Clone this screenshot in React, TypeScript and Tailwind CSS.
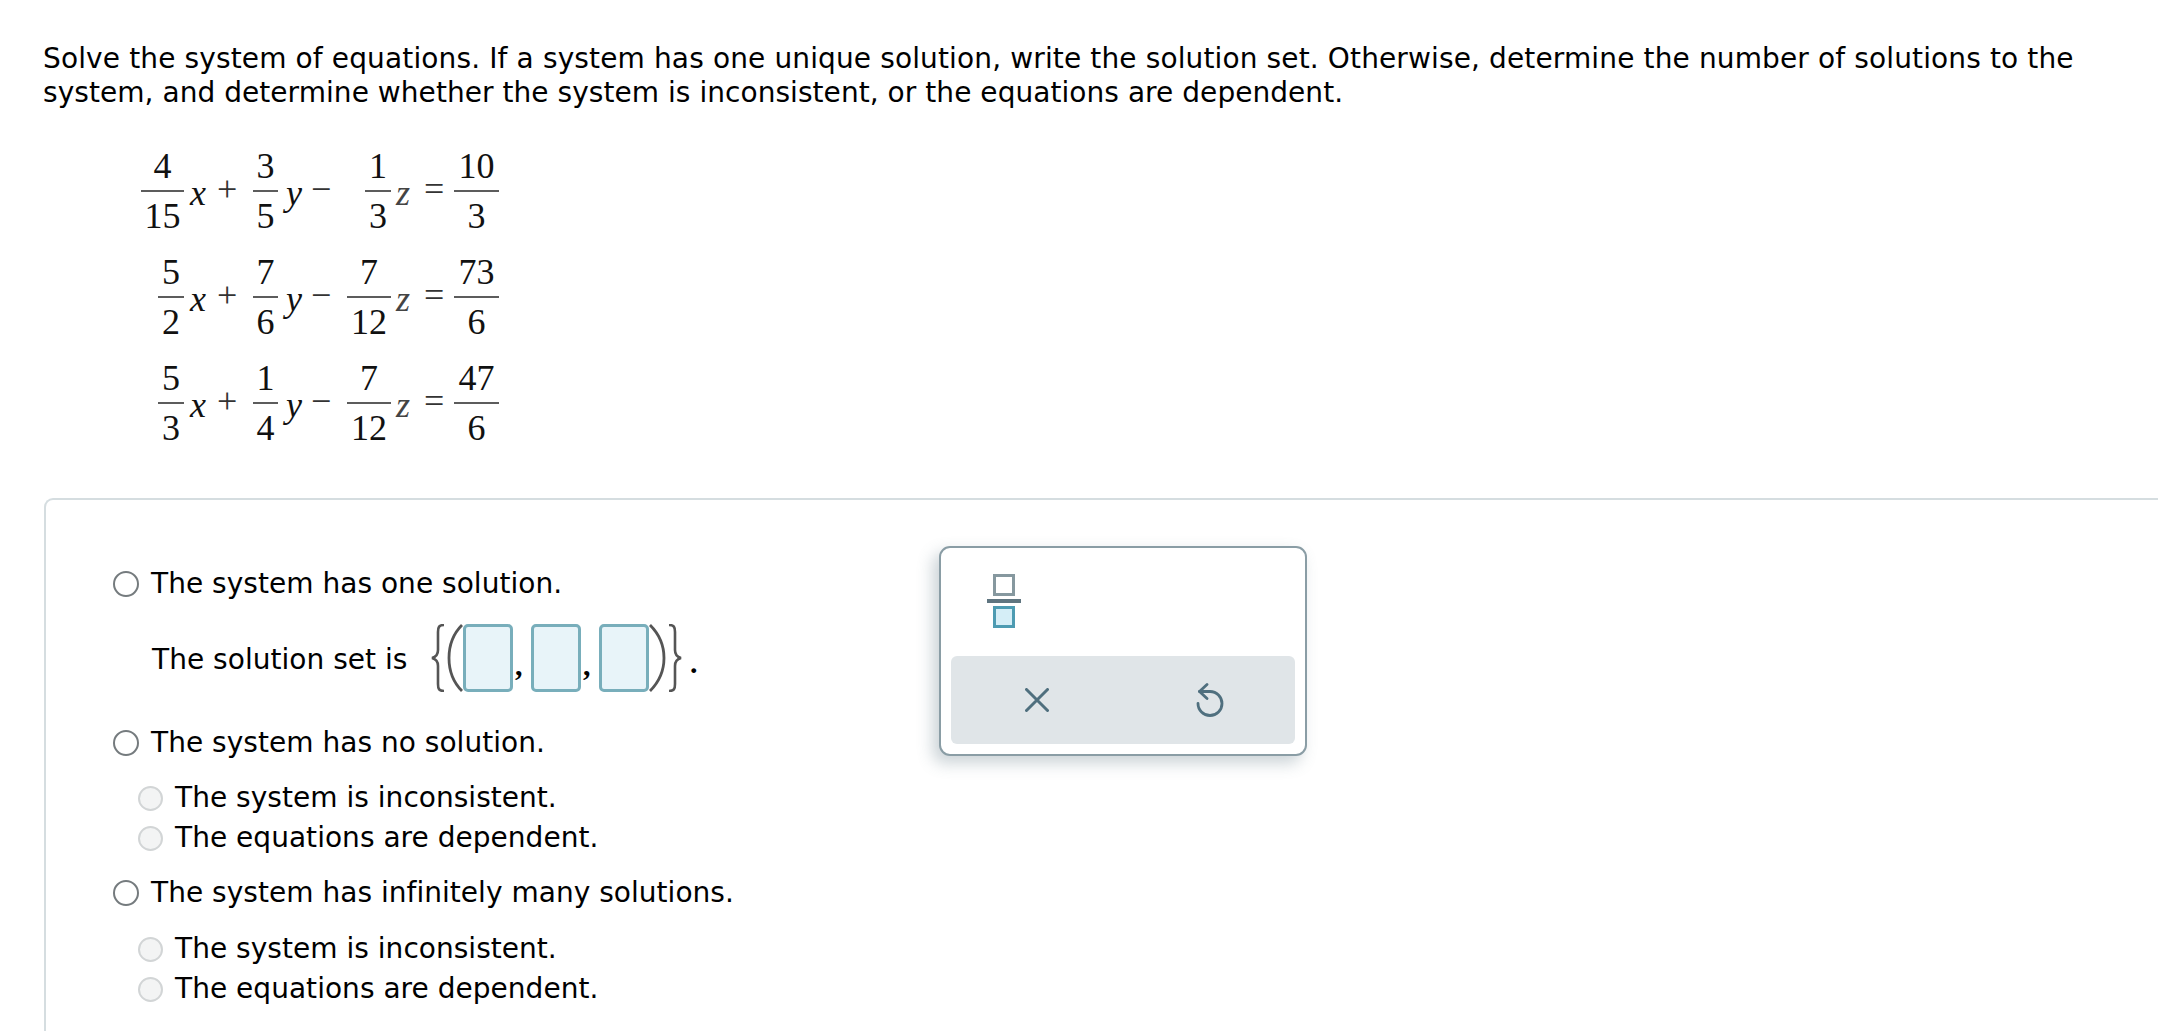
import { Fragment } from 'react'

interface FractionProps {
  top: string
  bottom: string
  className?: string
}

// 方程式の各行
const equations = [
  [['4', '15'], ['3', '5'], ['1', '3'], ['10', '3']],
  [['5', '2'], ['7', '6'], ['7', '12'], ['73', '6']],
  [['5', '3'], ['1', '4'], ['7', '12'], ['47', '6']],
]

function Fraction({ top, bottom, className = '' }: FractionProps) {
  return (
    <div className={`flex flex-col items-stretch text-center ${className}`}>
      <div className="h-[35px] leading-[22px]">{top}</div>
      <div className="h-[2px] bg-[#5c5c5c]" />
      <div className="h-[35px] leading-[48px]">{bottom}</div>
    </div>
  )
}

function Equation({ row }: { row: string[][] }) {
  return (
    <div className="grid h-[106px] grid-cols-[43px_33px_36px_25px_33px_36px_44px_33px_30px_45px] items-center">
      <Fraction top={row[0][0]} bottom={row[0][1]} className={row[0][1].length > 1 ? 'w-full' : 'ml-[17px] w-[26px]'} />
      <i className="pl-[6px] pt-[4px]">x</i>
      <span className="pb-[4px] text-[#333]">+</span>
      <Fraction top={row[1][0]} bottom={row[1][1]} />
      <i className="pl-[8px] pt-[4px]">y</i>
      <span className="pb-[4px] text-[#333]">−</span>
      <Fraction top={row[2][0]} bottom={row[2][1]} className={row[2][1].length > 1 ? 'w-full' : 'ml-[18px] w-[26px]'} />
      <i className="pl-[5px] pt-[4px] text-[#444]">z</i>
      <span className="pb-[4px] text-[#333]">=</span>
      <Fraction top={row[3][0]} bottom={row[3][1]} />
    </div>
  )
}

function Radio({ sub = false }: { sub?: boolean }) {
  return sub ? (
    <span className="block h-[25px] w-[25px] shrink-0 rounded-full border-2 border-[#d2d5d6] bg-[#f3f4f4]" />
  ) : (
    <span className="block h-[26px] w-[26px] shrink-0 rounded-full border-2 border-[#757b7e] bg-white" />
  )
}

function MainOption({ label, className = '' }: { label: string; className?: string }) {
  return (
    <div className={`flex h-[30px] items-center gap-[12px] pl-[67px] ${className}`}>
      <Radio />
      <span>{label}</span>
    </div>
  )
}

function SubOption({ label }: { label: string }) {
  return (
    <div className="flex h-[40px] items-center gap-[12px] pl-[92px]">
      <Radio sub />
      <span>{label}</span>
    </div>
  )
}

function AnswerBox() {
  return <div className="h-[68px] w-[50px] rounded-[5px] border-[3px] border-[#78aebb] bg-[#e8f4f9]" />
}

function LeftBrackets() {
  return (
    <svg width="32" height="68" viewBox="0 0 32 68" fill="none" stroke="#555" className="shrink-0">
      <path d="M13 1C8 1 7 3 7 8V26C7 31 5 33 1 34C5 35 7 37 7 42V60C7 65 8 67 13 67" strokeWidth="2.6" />
      <path d="M31 1C20 12 18 24 18 34C18 44 20 56 31 67" strokeWidth="2.8" />
    </svg>
  )
}

function RightBrackets() {
  return (
    <svg width="33" height="68" viewBox="0 0 33 68" fill="none" stroke="#555" className="shrink-0">
      <path d="M1 1C12 12 15 24 15 34C15 44 12 56 1 67" strokeWidth="2.8" />
      <path d="M20 1C25 1 26 3 26 8V26C26 31 28 33 32 34C28 35 26 37 26 42V60C26 65 25 67 20 67" strokeWidth="2.6" />
    </svg>
  )
}

function SolutionSet() {
  return (
    <div className="mt-[25px] flex h-[68px] items-center pl-[106px]">
      <span className="w-[279px] shrink-0 pt-[3px]">The solution set is</span>
      <LeftBrackets />
      {[0, 1, 2].map((i) => (
        <Fragment key={i}>
          <AnswerBox />
          {i < 2 && (
            <span className="w-[18px] pl-[2px] pt-[14px] font-['Liberation_Serif',serif] text-[30px] font-bold leading-none">,</span>
          )}
        </Fragment>
      ))}
      <RightBrackets />
      <span className="pl-[8px] pt-[10px] font-['Liberation_Serif',serif] text-[30px] font-bold leading-none">.</span>
    </div>
  )
}

function Palette() {
  return (
    <div className="absolute left-[893px] top-[46px] h-[210px] w-[368px] rounded-[11px] border-2 border-[#8a9da5] bg-white p-[10px] shadow-[-6px_7px_16px_rgba(80,105,120,0.3)]">
      <div className="flex h-[98px] flex-col pl-[36px] pt-[16px]">
        <div className="ml-[6px] h-[22px] w-[22px] border-[3px] border-[#86989f]" />
        <div className="mt-[3px] h-[4px] w-[34px] bg-[#5f7580]" />
        <div className="ml-[6px] mt-[3px] h-[22px] w-[22px] border-[3px] border-[#4d9bb2] bg-[#d5eef7]" />
      </div>
      <div className="flex h-[88px] items-center rounded-[6px] bg-[#e0e5e8] pl-[74px]">
        <svg width="24" height="24" viewBox="0 0 24 24" fill="none" stroke="#4f6f7e" strokeWidth="3" strokeLinecap="round">
          <path d="M1.5 1.5L22.5 22.5M22.5 1.5L1.5 22.5" />
        </svg>
        <svg width="28" height="34" viewBox="0 0 28 34" fill="none" stroke="#4f6f7e" strokeWidth="2.8" strokeLinecap="round" strokeLinejoin="round" className="ml-[147px]">
          <path d="M11 1.5L3.5 8.5L11 15.5" />
          <path d="M3.5 8.5H14A12 12 0 1 1 2 20.5" />
        </svg>
      </div>
    </div>
  )
}

export default function App() {
  return (
    <div className="h-[1031px] w-[2158px] overflow-hidden bg-white pt-[42px] font-['DejaVu_Sans','Verdana',sans-serif] text-[28px] leading-[34px] tracking-[0.03px] text-black">
      <p className="pl-[43px] pr-[40px]">
        <span className="tracking-[0.13px]">
          Solve the system of equations. If a system has one unique solution, write the solution set. Otherwise, determine the number of solutions to the
        </span>
        <br />
        <span className="tracking-[0.05px]">
          system, and determine whether the system is inconsistent, or the equations are dependent.
        </span>
      </p>

      <div className="mt-[28px] pl-[141px] font-['Liberation_Serif',serif] text-[36px] leading-none tracking-normal text-[#111]">
        {equations.map((row, i) => (
          <Equation key={i} row={row} />
        ))}
      </div>

      <div className="relative ml-[44px] mt-[42px] h-[600px] w-[2200px] rounded-tl-[9px] border-l-2 border-t-2 border-[#d5dde0] pt-[69px]">
        <MainOption label="The system has one solution." />
        <SolutionSet />
        <MainOption label="The system has no solution." className="mt-[36px]" />
        <div className="mt-[20px]">
          <SubOption label="The system is inconsistent." />
          <SubOption label="The equations are dependent." />
        </div>
        <MainOption label="The system has infinitely many solutions." className="mt-[20px]" />
        <div className="mt-[21px]">
          <SubOption label="The system is inconsistent." />
          <SubOption label="The equations are dependent." />
        </div>
        <Palette />
      </div>
    </div>
  )
}
